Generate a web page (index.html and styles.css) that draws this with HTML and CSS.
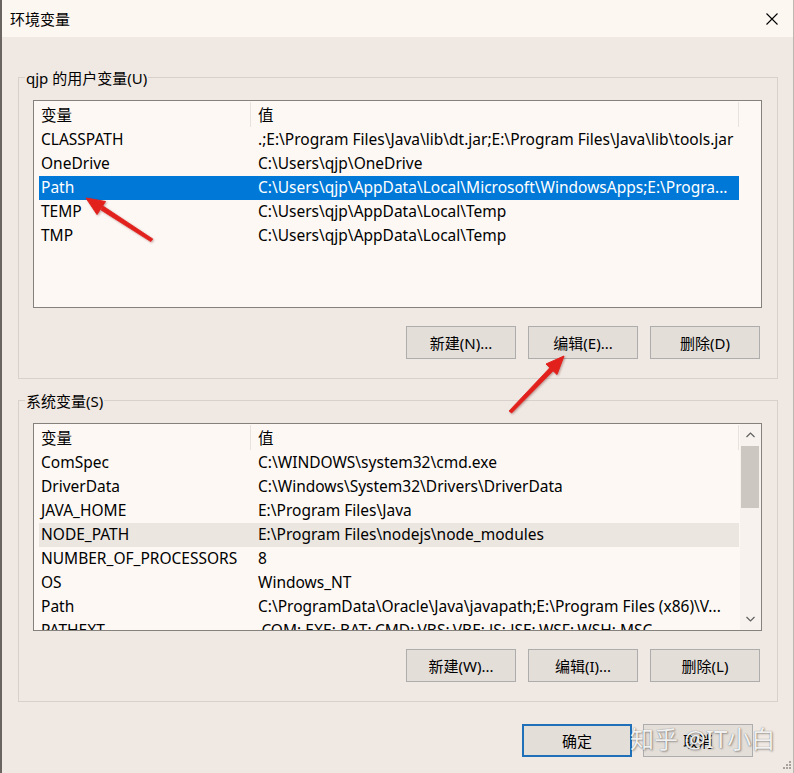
FILE: index.html
```html
<!DOCTYPE html>
<html lang="zh-CN">
<head>
<meta charset="utf-8">
<title>环境变量</title>
<link rel="stylesheet" href="styles.css">
</head>
<body>
<div class="window">
  <div class="titlebar">
    <span class="title">环境变量</span>
    <svg class="close" width="12" height="12" viewBox="0 0 12 12"><path d="M0.5 0.5 L11.5 11.5 M11.5 0.5 L0.5 11.5" stroke="#000" stroke-width="1.1" fill="none"/></svg>
  </div>
  <div class="content">
    <div class="group">
      <div class="group-label">qjp 的用户变量(U)</div>
      <div class="listbox">
        <div class="lv">
          <div class="lv-head"><div class="c1">变量</div><div class="c2">值</div></div>
          <div class="row"><div class="c1">CLASSPATH</div><div class="c2">.;E:\Program Files\Java\lib\dt.jar;E:\Program Files\Java\lib\tools.jar</div></div>
          <div class="row"><div class="c1">OneDrive</div><div class="c2">C:\Users\qjp\OneDrive</div></div>
          <div class="row selected"><div class="c1">Path</div><div class="c2">C:\Users\qjp\AppData\Local\Microsoft\WindowsApps;E:\Progra...</div></div>
          <div class="row"><div class="c1">TEMP</div><div class="c2">C:\Users\qjp\AppData\Local\Temp</div></div>
          <div class="row"><div class="c1">TMP</div><div class="c2">C:\Users\qjp\AppData\Local\Temp</div></div>
        </div>
      </div>
      <div class="btn-row">
        <button class="btn">新建(N)...</button>
        <button class="btn">编辑(E)...</button>
        <button class="btn">删除(D)</button>
      </div>
    </div>

    <div class="group group-sys">
      <div class="group-label">系统变量(S)</div>
      <div class="listbox">
        <div class="lv">
          <div class="lv-head"><div class="c1">变量</div><div class="c2">值</div></div>
          <div class="row"><div class="c1">ComSpec</div><div class="c2">C:\WINDOWS\system32\cmd.exe</div></div>
          <div class="row"><div class="c1">DriverData</div><div class="c2">C:\Windows\System32\Drivers\DriverData</div></div>
          <div class="row"><div class="c1">JAVA_HOME</div><div class="c2">E:\Program Files\Java</div></div>
          <div class="row hover"><div class="c1">NODE_PATH</div><div class="c2">E:\Program Files\nodejs\node_modules</div></div>
          <div class="row"><div class="c1">NUMBER_OF_PROCESSORS</div><div class="c2">8</div></div>
          <div class="row"><div class="c1">OS</div><div class="c2">Windows_NT</div></div>
          <div class="row"><div class="c1">Path</div><div class="c2">C:\ProgramData\Oracle\Java\javapath;E:\Program Files (x86)\V...</div></div>
          <div class="row"><div class="c1">PATHEXT</div><div class="c2">.COM;.EXE;.BAT;.CMD;.VBS;.VBE;.JS;.JSE;.WSF;.WSH;.MSC</div></div>
        </div>
        <div class="scrollbar">
          <div class="sb-btn"><svg width="21" height="21" viewBox="0 0 21 21"><polyline points="6.5,13 10.5,9 14.5,13" fill="none" stroke="#606060" stroke-width="1.2"/></svg></div>
          <div class="sb-track"><div class="sb-thumb"></div></div>
          <div class="sb-btn"><svg width="21" height="21" viewBox="0 0 21 21"><polyline points="6.5,8 10.5,12 14.5,8" fill="none" stroke="#606060" stroke-width="1.2"/></svg></div>
        </div>
      </div>
      <div class="btn-row">
        <button class="btn">新建(W)...</button>
        <button class="btn">编辑(I)...</button>
        <button class="btn">删除(L)</button>
      </div>
    </div>

    <div class="dialog-buttons">
      <button class="btn btn-default">确定</button>
      <button class="btn">取消</button>
    </div>
  </div>

  <svg class="annotations" width="794" height="773" viewBox="0 0 794 773">
    <g fill="#e2201c" stroke="#e2201c">
      <polygon points="152.8,239 150.8,241.6 101,210 103,206" stroke-width="0.8" stroke-linejoin="round"/>
      <polygon points="86,198 105.5,201.5 97,214.5" stroke-width="1"/>
      <polygon points="509,411 511.6,413 553,371 550,367.5" stroke-width="0.8" stroke-linejoin="round"/>
      <polygon points="564,356 557,374.5 546,364" stroke-width="1"/>
    </g>
  </svg>

  <div class="watermark">知乎 @IT小白</div>

  <svg class="grip" width="12" height="12" viewBox="0 0 12 12">
    <g fill="#a8a29d">
      <rect x="9" y="1" width="2" height="2"/>
      <rect x="6" y="4" width="2" height="2"/>
      <rect x="9" y="4" width="2" height="2"/>
      <rect x="3" y="7" width="2" height="2"/>
      <rect x="6" y="7" width="2" height="2"/>
      <rect x="9" y="7" width="2" height="2"/>
    </g>
  </svg>
</div>
</body>
</html>
```

FILE: styles.css
```css
* {
  box-sizing: border-box;
}

html,
body {
  margin: 0;
  padding: 0;
}

body {
  width: 794px;
  height: 773px;
  overflow: hidden;
  font-family: "Noto Sans", "Noto Sans CJK SC", sans-serif;
  font-size: 15.5px;
  color: #000;
  background: #f0e9e3;
}

.window {
  position: relative;
  width: 794px;
  height: 773px;
  border-left: 2px solid #6a6560;
  border-right: 1px solid #bdb7b2;
  background: #f0e9e3;
  display: flex;
  flex-direction: column;
}

.titlebar {
  flex: none;
  height: 37px;
  background: #fdf7f1;
  display: flex;
  align-items: center;
  justify-content: space-between;
  padding: 0 15px 0 8px;
}

.title {
  font-size: 15px;
  line-height: 20px;
}

.close {
  display: block;
}

.content {
  padding: 40px 15px 0 16px;
}

.group {
  border: 1px solid #d8d1cb;
  padding: 0 15px 19px 14px;
}

.group-sys {
  margin-top: 21px;
}

.group-label {
  width: max-content;
  margin: -10px 0 12px -8px;
  padding: 0 1px;
  font-size: 15px;
  line-height: 20px;
  background: #f0e9e3;
}

.listbox {
  display: flex;
  height: 208px;
  border: 1px solid #85817d;
  background: #fdf8f4;
  overflow: hidden;
}

.lv {
  flex: 1;
  min-width: 0;
  padding-left: 5px;
  overflow: hidden;
}

.lv-head,
.row {
  display: flex;
  width: 700px;
  white-space: nowrap;
}

.lv-head {
  height: 27px;
  align-items: stretch;
}

.lv-head .c1,
.lv-head .c2 {
  display: flex;
  align-items: center;
  border-right: 1px solid #e8e2dd;
  margin: 1px 0 1px;
}

.row {
  height: 24px;
  align-items: center;
  line-height: 23px;
  padding-bottom: 1px;
}

.c1 {
  width: 212px;
  padding-left: 2px;
  overflow: hidden;
}

.c2 {
  width: 488px;
  padding-left: 7px;
  overflow: hidden;
}

.row.selected {
  background: #0078d7;
  color: #fff;
}

.row.hover {
  background: #ece6e1;
}

.scrollbar {
  flex: none;
  width: 21px;
  display: flex;
  flex-direction: column;
  background: #f7f2ed;
}

.sb-btn {
  height: 21px;
  flex: none;
}

.sb-btn svg {
  display: block;
}

.sb-track {
  flex: 1;
  padding: 1px 2px 0 1px;
}

.sb-thumb {
  height: 62px;
  background: #cdc7c2;
}

.btn-row {
  display: flex;
  justify-content: flex-end;
  gap: 12px;
  margin-top: 18px;
  padding-right: 2px;
}

.btn {
  width: 110px;
  height: 33px;
  padding: 0 0 1px;
  font: inherit;
  font-size: 15px;
  color: #000;
  background: #e4ded9;
  border: 1px solid #adadad;
  border-radius: 0;
}

.btn-default {
  border: 2px solid #1f70b8;
}

.dialog-buttons {
  display: flex;
  justify-content: flex-end;
  gap: 11px;
  margin-top: 22px;
  padding-right: 25px;
}

.annotations {
  position: absolute;
  left: -2px;
  top: 0;
  pointer-events: none;
  filter: drop-shadow(1px 1px 1px rgba(90, 0, 0, 0.35));
}

.watermark {
  position: absolute;
  left: 628px;
  top: 724px;
  font-size: 24px;
  line-height: 30px;
  white-space: nowrap;
  color: rgba(255, 255, 255, 0.92);
  text-shadow: 0 0 1px rgba(0, 0, 0, 0.5), 1px 1px 2px rgba(0, 0, 0, 0.3);
  pointer-events: none;
}

.grip {
  position: absolute;
  right: 1px;
  bottom: 1px;
}
```
